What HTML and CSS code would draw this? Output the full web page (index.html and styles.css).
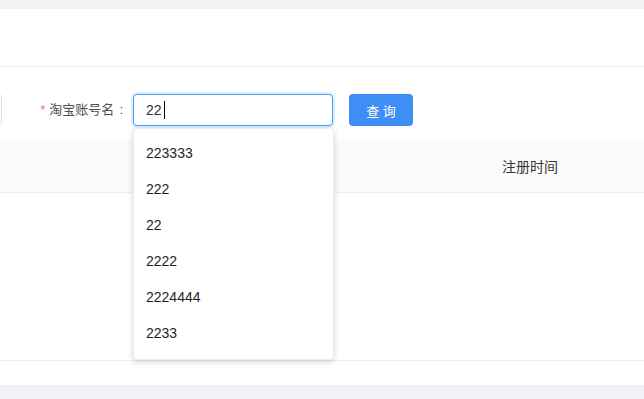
FILE: index.html
```html
<!DOCTYPE html>
<html lang="zh-CN">
<head>
<meta charset="utf-8">
<title>查询</title>
<link rel="stylesheet" href="styles.css">
</head>
<body>
<div class="page">
  <div class="card">
    <div class="card-head"></div>
    <div class="form-row">
      <div class="input partial"></div>
      <div class="form-item">
        <label class="label"><span class="star">*</span>淘宝账号名<span class="colon">:</span></label>
        <div class="input-wrap">
          <div class="input focused"><span class="value">22</span><span class="caret"></span></div>
          <ul class="suggest">
            <li>223333</li>
            <li>222</li>
            <li>22</li>
            <li>2222</li>
            <li>2224444</li>
            <li>2233</li>
          </ul>
        </div>
      </div>
      <button class="btn">查 询</button>
    </div>
    <div class="table">
      <div class="thead">
        <div class="th"></div>
        <div class="th">注册时间</div>
      </div>
      <div class="tbody"></div>
    </div>
    <div class="card-foot"></div>
  </div>
</div>
</body>
</html>
```
FILE: styles.css
```css
* { box-sizing: border-box; }
html, body { margin: 0; padding: 0; }
body {
  background: #f0f2f5;
  font-family: "Liberation Sans", "Noto Sans CJK SC", sans-serif;
  color: #606266;
  width: 644px;
  height: 399px;
  overflow: hidden;
}
.page { padding-top: 9px; }
.card { background: #fff; }
.card-head {
  height: 58px;
  border-bottom: 1px solid #ebeef5;
}
.form-row {
  display: flex;
  align-items: center;
  padding-top: 27px;
  margin-bottom: 14px;
}
.input {
  height: 32px;
  border: 1px solid #dcdfe6;
  border-radius: 4px;
  background: #fff;
}
.partial {
  width: 122px;
  margin-left: -120px;
}
.form-item {
  display: flex;
  align-items: center;
  margin-left: 35px;
}
.label {
  width: 96px;
  padding-right: 10px;
  text-align: right;
  font-size: 13px;
  color: #4e5056;
  line-height: 32px;
  white-space: nowrap;
}
.star { color: #f56c6c; margin-right: 4px; }
.colon { margin-left: 5px; }
.input-wrap { position: relative; }
.focused {
  width: 200px;
  display: flex;
  align-items: center;
  padding: 0 12px;
  border-color: #4a9ef0;
  box-shadow: 0 0 0 2px rgba(64, 158, 255, 0.18);
  font-size: 14px;
  color: #303133;
}
.caret {
  display: inline-block;
  width: 1px;
  height: 18px;
  background: #000;
  margin-left: 2px;
}
.suggest {
  position: absolute;
  top: 34px;
  left: 0;
  width: 201px;
  height: 232px;
  margin: 0;
  padding: 6px 0 10px;
  list-style: none;
  background: #fff;
  border: 1px solid #eceef2;
  border-radius: 4px;
  box-shadow: 0 2px 6px rgba(0, 0, 0, 0.16);
  z-index: 10;
}
.suggest li {
  height: 36px;
  line-height: 36px;
  padding: 0 12px;
  font-size: 14px;
  color: #1f1f1f;
}
.btn {
  margin-left: 16px;
  width: 64px;
  height: 32px;
  border: none;
  border-radius: 4px;
  background: #3f8ef5;
  color: #fff;
  font-family: "Liberation Sans", "Noto Sans CJK SC", sans-serif;
  font-size: 13px;
  padding: 0;
}
.thead {
  display: grid;
  grid-template-columns: 490px 1fr;
  height: 53px;
  background: #fafafa;
  border-bottom: 1px solid #ebeef5;
}
.th {
  display: flex;
  align-items: center;
  padding: 0 12px;
  font-size: 14px;
  color: #333;
}
.tbody {
  height: 168px;
  border-bottom: 1px solid #ebeef5;
}
.card-foot { height: 24px; }
```
